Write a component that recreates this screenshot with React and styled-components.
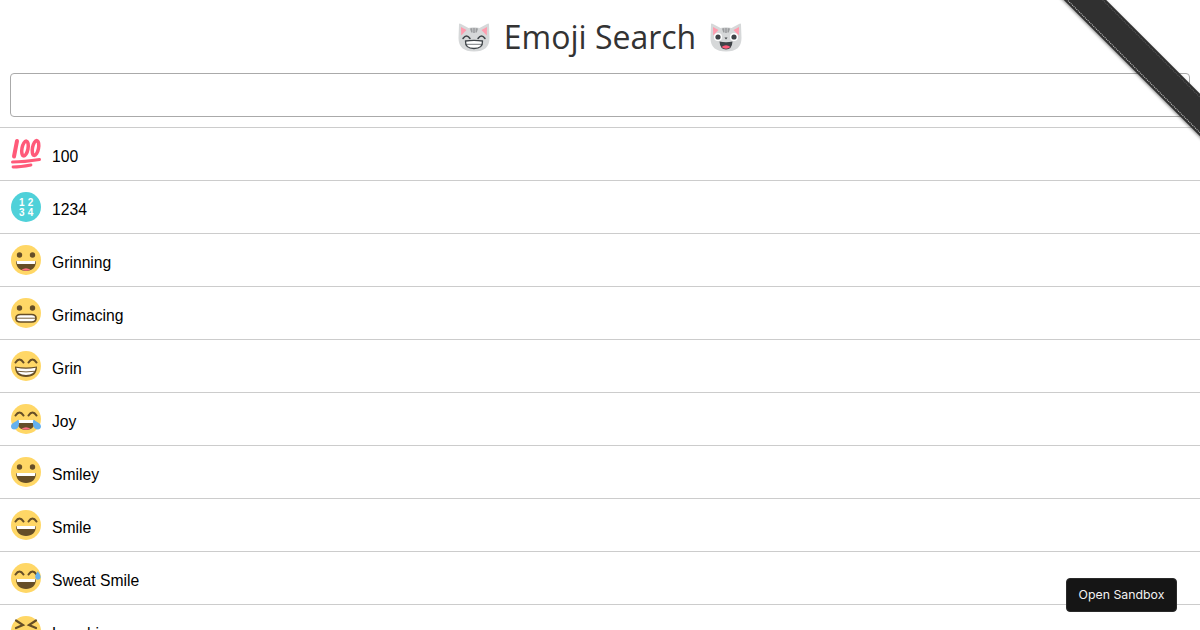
import React from 'react';
import styled, {createGlobalStyle} from 'styled-components';

const GlobalStyle = createGlobalStyle`
  html, body {
    margin: 0;
    height: 100%;
    overflow: hidden;
    background: #fff;
  }
`;

const Page = styled.div`
  position: relative;
  height: 630px;
  overflow: hidden;
  font-family: "Liberation Sans", Arial, sans-serif;
`;

const Header = styled.header`
  display: flex;
  align-items: center;
  justify-content: center;
  gap: 14px;
  height: 73px;
  box-sizing: border-box;
`;

const Title = styled.h1`
  margin: 0;
  font-family: "Open Sans", sans-serif;
  font-size: 32px;
  font-weight: 400;
  color: #333;
`;

const SearchBar = styled.div`
  padding: 0 10px 10px;
`;

const SearchInput = styled.input`
  display: block;
  box-sizing: border-box;
  width: 100%;
  height: 44px;
  border: 1px solid #aaa;
  border-radius: 4px;
  font-size: 18px;
  padding: 0 10px;
  outline: none;
`;

const Row = styled.div`
  display: flex;
  align-items: center;
  gap: 10px;
  height: 53px;
  box-sizing: border-box;
  padding: 0 10px;
  border-top: 1px solid #ccc;
`;

const RowTitle = styled.span`
  font-size: 15.7px;
  color: #000;
  padding-top: 6px;
`;

const EmojiIcon = styled.svg`
  flex: none;
  display: block;
  width: 32px;
  height: 32px;
`;

const CatIcon = styled.svg`
  flex: none;
  display: block;
  width: 32px;
  height: 32px;
`;

const Ribbon = styled.a`
  position: absolute;
  top: 85px;
  left: 985px;
  width: 400px;
  height: 30px;
  transform: rotate(45deg);
  background: #303030;
  box-shadow: 0 1px 3px rgba(0, 0, 0, 0.45);

  &::before {
    content: "";
    position: absolute;
    inset: 2px 0;
    border-top: 1px dotted rgba(255, 255, 255, 0.2);
    border-bottom: 1px dotted rgba(255, 255, 255, 0.75);
  }
`;

const SandboxButton = styled.button`
  position: absolute;
  right: 23px;
  bottom: 18px;
  width: 111px;
  height: 34px;
  padding: 0 0 1px;
  border: 1px solid #2a2a2a;
  border-radius: 4px;
  background: #151515;
  color: #f2f2f2;
  font-family: Inter, sans-serif;
  font-size: 12.3px;
`;

const FACE = '#FFD766';
const DARK = '#664E27';

const Face = () => <circle cx="16" cy="16" r="15" fill={FACE} />;

const RoundEyes = () => (
  <>
    <circle cx="9.5" cy="11" r="2.7" fill={DARK} />
    <circle cx="22.5" cy="11" r="2.7" fill={DARK} />
  </>
);

const ArchEyes = () => (
  <g fill="none" stroke={DARK} strokeWidth="2.1" strokeLinecap="round">
    <path d="M5.5 12.5 Q9.5 6.5 13.5 12.5" />
    <path d="M18.5 12.5 Q22.5 6.5 26.5 12.5" />
  </g>
);

const OpenMouth = ({tongue}) => (
  <>
    <path d="M6 17 H26 C26 23.5 22 27 16 27 S6 23.5 6 17Z" fill={DARK} />
    <path d="M6.5 17 H25.5 L24.8 20 H7.2Z" fill="#fff" />
    {tongue && <path d="M11.5 25.8 Q16 22.5 20.5 25.8 Q16 27.8 11.5 25.8Z" fill="#FF717F" />}
  </>
);

const LensTeeth = () => (
  <g>
    <path d="M6 21.2 Q6 17.5 10.5 17.5 H21.5 Q26 17.5 26 21.2 Q26 25 21.5 25 H10.5 Q6 25 6 21.2Z" fill="#fff" stroke={DARK} strokeWidth="1.7" />
    <path d="M6.5 21.2 H25.5" stroke={DARK} strokeWidth="0.9" />
  </g>
);

const GrinMouth = () => (
  <>
    <path d="M5 16.5 Q16 18.5 27 16.5 Q27 27 16 27 Q5 27 5 16.5Z" fill={DARK} />
    <path d="M6.3 17.8 Q16 19.6 25.7 17.8 Q25 25 16 25 Q7 25 6.3 17.8Z" fill="#fff" />
    <path d="M6.5 21.2 Q16 22.6 25.5 21.2" fill="none" stroke={DARK} strokeWidth="0.9" />
  </>
);

const Drop = ({d}) => <path d={d} fill="#65B1EF" />;

const icons = {
  hundred: (
    <g fill="none" stroke="#FF5A79" strokeLinecap="round">
      <path d="M7 3 L4 18.5" strokeWidth="4" />
      <ellipse cx="15" cy="10.5" rx="3" ry="7.5" transform="rotate(11 15 10.5)" strokeWidth="3.5" />
      <ellipse cx="25.5" cy="10" rx="3" ry="7.5" transform="rotate(11 25.5 10)" strokeWidth="3.5" />
      <path d="M2.5 24 Q14 24 29.5 21.5" strokeWidth="3" />
      <path d="M3 29 Q10 29 21 27" strokeWidth="2.8" />
    </g>
  ),
  numbers: (
    <>
      <circle cx="16" cy="16" r="15" fill="#4FD1D9" />
      <g fill="#fff" fontFamily="'Liberation Sans', sans-serif" fontSize="10" fontWeight="700" textAnchor="middle">
        <text x="11.8" y="14.5">1</text>
        <text x="20.5" y="14.5">2</text>
        <text x="11.8" y="25">3</text>
        <text x="20.5" y="25">4</text>
      </g>
    </>
  ),
  grinning: (
    <>
      <Face />
      <RoundEyes />
      <OpenMouth tongue />
    </>
  ),
  grimacing: (
    <>
      <Face />
      <RoundEyes />
      <LensTeeth />
    </>
  ),
  grin: (
    <>
      <Face />
      <ArchEyes />
      <GrinMouth />
    </>
  ),
  joy: (
    <>
      <Face />
      <ArchEyes />
      <path d="M7 17 H25 C25 23.5 22 27 16 27 S7 23.5 7 17Z" fill={DARK} />
      <path d="M7.3 17 H24.7 L24 20 H8Z" fill="#fff" />
      <path d="M11.5 25.8 Q16 22.5 20.5 25.8 Q16 27.8 11.5 25.8Z" fill="#FF717F" />
      <Drop d="M8.5 16.5 C6.5 19 1 19.5 1 23.5 C1 26.8 5.5 27.5 7.8 24.8 C9.4 22.8 9.4 19 8.5 16.5Z" />
      <Drop d="M23.5 16.5 C25.5 19 31 19.5 31 23.5 C31 26.8 26.5 27.5 24.2 24.8 C22.6 22.8 22.6 19 23.5 16.5Z" />
    </>
  ),
  smiley: (
    <>
      <Face />
      <RoundEyes />
      <OpenMouth />
    </>
  ),
  smile: (
    <>
      <Face />
      <ArchEyes />
      <OpenMouth />
    </>
  ),
  sweat: (
    <>
      <Face />
      <ArchEyes />
      <OpenMouth />
      <Drop d="M27.8 9 C27 11 25.2 12.5 25.2 14.8 C25.2 16.6 26.4 17.8 27.9 17.8 C29.4 17.8 30.6 16.6 30.6 14.8 C30.6 12.5 28.6 11 27.8 9Z" />
    </>
  ),
  laughing: (
    <>
      <Face />
      <g fill="none" stroke={DARK} strokeWidth="2.2" strokeLinecap="round">
        <path d="M6 5.5 L13 10 L6 13" />
        <path d="M26 5.5 L19 10 L26 13" />
      </g>
      <OpenMouth />
    </>
  ),
};

const rows = [
  ['hundred', '100'],
  ['numbers', '1234'],
  ['grinning', 'Grinning'],
  ['grimacing', 'Grimacing'],
  ['grin', 'Grin'],
  ['joy', 'Joy'],
  ['smiley', 'Smiley'],
  ['smile', 'Smile'],
  ['sweat', 'Sweat Smile'],
  ['laughing', 'Laughing'],
];

const CatHead = () => (
  <>
    <path d="M1 3.5 Q1 2 3 3 L10.5 7 Q16 5.5 21.5 7 L29 3 Q31 2 31 3.5 L31.5 17 Q31.5 30.5 16 30.5 Q0.5 30.5 0.5 17Z" fill="#D6D8D9" />
    <path d="M3 6 L8.5 9 L3.2 14.5Z" fill="#FF9CAE" />
    <path d="M29 6 L23.5 9 L28.8 14.5Z" fill="#FF9CAE" />
    <path d="M12 7.5 L13.2 11.5 H14.6 L14.4 7Z M15.2 7 V12 H16.8 V7Z M20 7.5 L18.8 11.5 H17.4 L17.6 7Z" fill="#9A9C9E" />
  </>
);

const GrinCat = () => (
  <CatIcon viewBox="0 0 32 32">
    <CatHead />
    <g fill="none" stroke="#3E4347" strokeWidth="1.5" strokeLinecap="round">
      <path d="M5 17.5 Q8.5 12.5 12 17.5" />
      <path d="M20 17.5 Q23.5 12.5 27 17.5" />
    </g>
    <path d="M7.5 20 Q16 18.6 24.5 20 Q25 27.5 16 27.5 Q7 27.5 7.5 20Z" fill="#fff" stroke="#3E4347" strokeWidth="1.3" />
    <path d="M8 23.3 H24" stroke="#3E4347" strokeWidth="0.7" />
  </CatIcon>
);

const SmileyCat = () => (
  <CatIcon viewBox="0 0 32 32">
    <CatHead />
    <circle cx="8" cy="16" r="4" fill="#fff" />
    <circle cx="24" cy="16" r="4" fill="#fff" />
    <circle cx="8" cy="16" r="2.6" fill="#3E4347" />
    <circle cx="24" cy="16" r="2.6" fill="#3E4347" />
    <path d="M14.5 16.5 H17.5 L16 18.5Z" fill="#3E4347" />
    <path d="M9.5 20.5 Q16 22 22.5 20.5 Q22 28.5 16 28.5 Q10 28.5 9.5 20.5Z" fill="#3E4347" />
    <path d="M11.5 26 Q16 22.5 20.5 26 Q16 29.5 11.5 26Z" fill="#FF5A79" />
  </CatIcon>
);

export default function App() {
  return (
    <Page>
      <GlobalStyle />
      <Header>
        <GrinCat />
        <Title>Emoji Search</Title>
        <SmileyCat />
      </Header>
      <SearchBar>
        <SearchInput />
      </SearchBar>
      {rows.map(([icon, title]) => (
        <Row key={title}>
          <EmojiIcon viewBox="0 0 32 32">{icons[icon]}</EmojiIcon>
          <RowTitle>{title}</RowTitle>
        </Row>
      ))}
      <Ribbon />
      <SandboxButton>Open Sandbox</SandboxButton>
    </Page>
  );
}
